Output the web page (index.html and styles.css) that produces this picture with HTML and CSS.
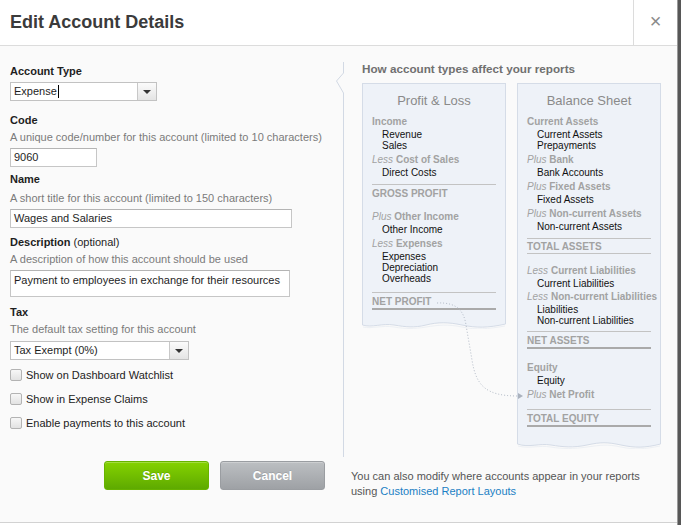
FILE: index.html
```html
<!DOCTYPE html>
<html lang="en">
<head>
<meta charset="utf-8">
<title>Edit Account Details</title>
<link rel="stylesheet" href="styles.css">
</head>
<body>
<div class="page">
  <div class="dialog">
    <header class="header">
      <h1 class="title">Edit Account Details</h1>
      <div class="close">×</div>
    </header>
    <div class="body">
      <div class="form">
        <div class="label">Account Type</div>
        <div class="select w-type mt4">
          <span class="select-value">Expense<span class="caret"></span></span>
          <span class="select-btn"><span class="tri"></span></span>
        </div>

        <div class="label mt12">Code</div>
        <div class="hint mt3">A unique code/number for this account (limited to 10 characters)</div>
        <div class="field w-code mt4">9060</div>

        <div class="label mt5">Name</div>
        <div class="hint mt5">A short title for this account (limited to 150 characters)</div>
        <div class="field w-name mt4">Wages and Salaries</div>

        <div class="label mt7">Description <span class="opt">(optional)</span></div>
        <div class="hint mt3">A description of how this account should be used</div>
        <div class="field area w-desc mt4">Payment to employees in exchange for their resources</div>

        <div class="label mt8">Tax</div>
        <div class="hint mt3">The default tax setting for this account</div>
        <div class="select w-tax mt5">
          <span class="select-value">Tax Exempt (0%)</span>
          <span class="select-btn"><span class="tri"></span></span>
        </div>

        <div class="checks">
          <div class="check"><span class="box"></span>Show on Dashboard Watchlist</div>
          <div class="check"><span class="box"></span>Show in Expense Claims</div>
          <div class="check"><span class="box"></span>Enable payments to this account</div>
        </div>

        <div class="buttons">
          <div class="btn save">Save</div>
          <div class="btn cancel">Cancel</div>
        </div>
      </div>

      <div class="info">
        <div class="diagram">
          <svg class="divider" width="14" height="395" viewBox="0 0 14 395">
            <path d="M10.5 0 V11 L3.5 19 L10.5 31 V395" fill="none" stroke="#d2d9e4" stroke-width="1"/>
          </svg>
          <div class="panel">
            <div class="panel-title">How account types affect your reports</div>
            <div class="boxes">
              <div class="report-wrap">
                <div class="report pl">
                  <div class="report-title">Profit &amp; Loss</div>
                  <div class="rh">Income</div>
                  <div class="ri">Revenue</div>
                  <div class="ri">Sales</div>
                  <div class="rh"><i>Less</i> Cost of Sales</div>
                  <div class="ri">Direct Costs</div>
                  <div class="total">GROSS PROFIT</div>
                  <div class="rh"><i>Plus</i> Other Income</div>
                  <div class="ri">Other Income</div>
                  <div class="rh"><i>Less</i> Expenses</div>
                  <div class="ri">Expenses</div>
                  <div class="ri">Depreciation</div>
                  <div class="ri">Overheads</div>
                  <div class="total final lower">NET PROFIT</div>
                </div>
                <svg class="tear" width="144" height="9" viewBox="0 0 144 9">
                  <path d="M0 0 V5 C10 8 20 3 32 5 S52 8 64 5 S86 2 100 5 S126 8 144 4 V0 Z" fill="#eef2f8"/>
                  <path d="M0.5 0 V5 C10 8 20 3 32 5 S52 8 64 5 S86 2 100 5 S126 8 143.5 4 V0" fill="none" stroke="#d5dce7"/>
                  <path d="M1 7 C10 9 20 5 32 7 S52 9 64 7 S86 4 100 7 S126 9 143 6" fill="none" stroke="#edf0f4"/>
                </svg>
              </div>
              <div class="report-wrap">
                <div class="report bs">
                  <div class="report-title">Balance Sheet</div>
                  <div class="rh">Current Assets</div>
                  <div class="ri">Current Assets</div>
                  <div class="ri">Prepayments</div>
                  <div class="rh"><i>Plus</i> Bank</div>
                  <div class="ri">Bank Accounts</div>
                  <div class="rh"><i>Plus</i> Fixed Assets</div>
                  <div class="ri">Fixed Assets</div>
                  <div class="rh"><i>Plus</i> Non-current Assets</div>
                  <div class="ri">Non-current Assets</div>
                  <div class="total boxed">TOTAL ASSETS</div>
                  <div class="rh"><i>Less</i> Current Liabilities</div>
                  <div class="ri">Current Liabilities</div>
                  <div class="rh tight"><i>Less</i> Non-current Liabilities</div>
                  <div class="ri">Liabilities</div>
                  <div class="ri">Non-current Liabilities</div>
                  <div class="total final upper">NET ASSETS</div>
                  <div class="rh wide">Equity</div>
                  <div class="ri">Equity</div>
                  <div class="rh"><i>Plus</i> Net Profit</div>
                  <div class="total final lower">TOTAL EQUITY</div>
                </div>
                <svg class="tear" width="144" height="9" viewBox="0 0 144 9">
                  <path d="M0 0 V4 C12 8 22 3 34 5 S56 8 70 5 S90 2 104 5 S128 8 144 4 V0 Z" fill="#eef2f8"/>
                  <path d="M0.5 0 V4 C12 8 22 3 34 5 S56 8 70 5 S90 2 104 5 S128 8 143.5 4 V0" fill="none" stroke="#d5dce7"/>
                  <path d="M1 6 C12 9 22 5 34 7 S56 9 70 7 S90 4 104 7 S128 9 143 6" fill="none" stroke="#edf0f4"/>
                </svg>
              </div>
            </div>
            <svg class="connector" width="299" height="395" viewBox="0 0 299 395">
              <path d="M75 241 C96 240 102 250 104 263 L110 298 C114 323 123 334 156 334" fill="none" stroke="#b3bbc7" stroke-width="1" stroke-dasharray="1 2"/>
              <polygon points="156,331 161,334 156,337" fill="#a9b1bd"/>
            </svg>
          </div>
        </div>
        <p class="note">You can also modify where accounts appear in your reports<br>using <a class="link" href="#">Customised Report Layouts</a></p>
      </div>
    </div>
  </div>
  <div class="edge"></div>
</div>
</body>
</html>
```
FILE: styles.css
```css
* { box-sizing: border-box; }

body {
  margin: 0;
  background: #ffffff;
  font-family: "Liberation Sans", Arial, sans-serif;
}

.page {
  display: flex;
  width: 681px;
  height: 525px;
}

.dialog {
  width: 677px;
  height: 523px;
  background: #fafafa;
  border-bottom: 1px solid #d2d2d2;
  display: flex;
  flex-direction: column;
}

.edge {
  width: 4px;
  background: #575757;
  border-left: 1px solid #9a9a9a;
}

/* header */
.header {
  height: 46px;
  flex: none;
  background: #ffffff;
  border-bottom: 1px solid #dcdcdc;
  display: flex;
}

.title {
  flex: 1;
  margin: 0;
  padding-left: 10px;
  font-size: 18px;
  line-height: 44px;
  font-weight: bold;
  color: #3b3b3b;
}

.close {
  width: 44px;
  border-left: 1px solid #dcdcdc;
  display: flex;
  align-items: center;
  justify-content: center;
  font-size: 20px;
  color: #8a8a8a;
  padding-bottom: 2px;
}

/* body */
.body {
  flex: 1;
  display: flex;
}

.form {
  width: 333px;
  flex: none;
  padding: 18px 0 0 10px;
  display: flex;
  flex-direction: column;
  align-items: flex-start;
  font-size: 11px;
  color: #222;
}

.label {
  font-weight: bold;
  line-height: 14px;
  color: #1e1e1e;
}

.label .opt { font-weight: normal; }

.hint {
  line-height: 14px;
  color: #7a7a7a;
}

.mt3 { margin-top: 3px; }
.mt4 { margin-top: 4px; }
.mt5 { margin-top: 5px; }
.mt7 { margin-top: 7px; }
.mt8 { margin-top: 8px; }
.mt12 { margin-top: 12px; }

.field {
  height: 19px;
  background: #ffffff;
  border: 1px solid #c6c6c6;
  border-top-color: #b4b4b4;
  line-height: 17px;
  padding: 0 3px;
  color: #1e1e1e;
  white-space: nowrap;
}

.field.area {
  height: 27px;
  line-height: 14px;
  padding-top: 2px;
}

.w-code { width: 87px; }
.w-name { width: 282px; }
.w-desc { width: 280px; }

.select {
  height: 19px;
  display: flex;
  background: #ffffff;
  border: 1px solid #c2c2c2;
  color: #1e1e1e;
}

.w-type { width: 147px; }
.w-tax { width: 179px; }

.select-value {
  flex: 1;
  line-height: 17px;
  padding-left: 3px;
  display: flex;
  align-items: center;
}

.caret {
  width: 1px;
  height: 13px;
  background: #000;
  margin-left: 1px;
}

.select-btn {
  width: 19px;
  border-left: 1px solid #c8c8c8;
  background: linear-gradient(#fbfbfb, #e4e4e4);
  display: flex;
  align-items: center;
  justify-content: center;
}

.tri {
  width: 0;
  height: 0;
  border-left: 4px solid transparent;
  border-right: 4px solid transparent;
  border-top: 4px solid #333;
}

.checks {
  margin-top: 7px;
  display: flex;
  flex-direction: column;
  gap: 8px;
}

.check {
  display: flex;
  align-items: center;
  gap: 4px;
  line-height: 16px;
  color: #222;
}

.box {
  width: 12px;
  height: 12px;
  border: 1px solid #b3b3b3;
  border-radius: 2px;
  background: linear-gradient(#f7f7f7, #e2e2e2);
}

.buttons {
  margin: 30px 0 0 94px;
  display: flex;
  gap: 11px;
}

.btn {
  width: 105px;
  height: 29px;
  border-radius: 3px;
  display: flex;
  align-items: center;
  justify-content: center;
  color: #ffffff;
  font-size: 12px;
  font-weight: bold;
}

.save {
  background: linear-gradient(#85d200, #5eaa00);
  border: 1px solid #67b300;
  box-shadow: inset 0 1px 0 rgba(255, 255, 255, 0.25);
  text-shadow: 0 -1px 0 rgba(0, 0, 0, 0.12);
}

.cancel {
  background: linear-gradient(#bcbfc2, #9ea1a5);
  border: 1px solid #9a9da1;
  box-shadow: inset 0 1px 0 rgba(255, 255, 255, 0.25);
  text-shadow: 0 -1px 0 rgba(0, 0, 0, 0.1);
}

/* info side */
.info {
  flex: 1;
  padding-top: 16px;
  display: flex;
  flex-direction: column;
}

.diagram {
  display: flex;
  height: 395px;
}

.divider {
  flex: none;
  display: block;
}

.panel {
  position: relative;
  margin-left: 15px;
  width: 299px;
}

.panel-title {
  font-size: 11.7px;
  font-weight: bold;
  line-height: 14px;
  color: #707070;
}

.boxes {
  margin-top: 7px;
  display: flex;
  gap: 11px;
  align-items: flex-start;
}

.report-wrap {
  width: 144px;
}

.report {
  width: 144px;
  background: #eef2f8;
  border: 1px solid #d5dce7;
  border-bottom: none;
  padding: 9px 9px 0;
  font-size: 10px;
}

.report.pl { padding-bottom: 10px; }
.report.bs { padding-bottom: 13px; }

.tear { display: block; }

.report-title {
  text-align: center;
  font-size: 13px;
  line-height: 16px;
  color: #8a8a8a;
}

.rh {
  margin-top: 3px;
  line-height: 12px;
  font-weight: bold;
  color: #a2a2a2;
  white-space: nowrap;
}

.rh i { font-weight: normal; }

.report-title + .rh { margin-top: 7px; }
.rh.tight { margin-top: 2px; }
.rh.wide { margin-top: 13px; }

.ri {
  padding-left: 10px;
  line-height: 11px;
  color: #111;
  white-space: nowrap;
}

.rh + .ri { margin-top: 1px; }

.total {
  margin-top: 6px;
  border-top: 1px solid #c3c3c3;
  padding-top: 2px;
  line-height: 13px;
  font-weight: bold;
  color: #a2a2a2;
}

.total + .rh { margin-top: 11px; }
.total + .rh.wide { margin-top: 13px; }

.total.final { border-bottom: 2px solid #aaaaaa; }
.total.lower { margin-top: 8px; }
.total.upper { margin-top: 5px; }

.total.boxed {
  border-bottom: 1px solid #c3c3c3;
  line-height: 12px;
}

.connector {
  position: absolute;
  left: 0;
  top: 0;
  pointer-events: none;
}

.note {
  margin: 12px 0 0 18px;
  font-size: 11px;
  line-height: 15px;
  color: #555555;
}

.link {
  color: #1b80c4;
  text-decoration: none;
}
```
